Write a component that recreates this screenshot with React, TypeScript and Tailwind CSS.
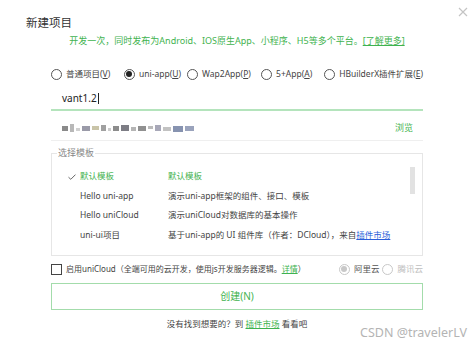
import React from 'react';

const green = 'text-[#3fb34f]';

const Radio = ({ checked, muted }: { checked?: boolean; muted?: boolean }) => (
  <span
    className={`flex h-[11px] w-[11px] shrink-0 items-center justify-center rounded-full border ${
      muted ? 'border-[#c8c8c8]' : 'border-[#555]'
    }`}
  >
    {checked && <span className={`h-[6px] w-[6px] rounded-full ${muted ? 'bg-[#c8c8c8]' : 'bg-[#222]'}`} />}
  </span>
);

const modes = [
  { label: '普通项目', key: 'V', w: 'w-[74px]' },
  { label: 'uni-app', key: 'U', w: 'w-[64px]', checked: true },
  { label: 'Wap2App', key: 'P', w: 'w-[75px]' },
  { label: '5+App', key: 'A', w: 'w-[64px]' },
  { label: 'HBuilderX插件扩展', key: 'E', w: 'flex-1' },
];

const templates = [
  { name: '默认模板', desc: <>默认模板</>, active: true },
  { name: 'Hello uni-app', desc: <>演示uni-app框架的组件、接口、模板</> },
  { name: 'Hello uniCloud', desc: <>演示uniCloud对数据库的基本操作</> },
  {
    name: 'uni-ui项目',
    desc: (
      <>
        基于uni-app的 UI 组件库（作者：DCloud），来自<span className="text-[#2b5fd9] underline">插件市场</span>
      </>
    ),
  },
];

// mosaic blocks standing in for the blurred path
const mosaic = [
  [4, 5, '#8a8a8a', 1], [2, 8, '#b8b8b8', -1], [3, 3, '#d0d0d0', 2], [5, 5, '#9a9aa8', 1], [4, 4, '#c9c4a8', -1],
  [3, 6, '#a0a0a0', 0], [2, 3, '#ccc', 2], [4, 5, '#8c8c8c', 1], [5, 6, '#7d7d85', 0], [3, 4, '#b5b5b5', 2],
  [5, 5, '#909090', 1], [3, 3, '#bbb', -2], [4, 6, '#a8a8b8', 0], [5, 4, '#c2c2c2', 2], [6, 6, '#8793b0', 1],
  [6, 5, '#9aa3bc', 1],
] as const;

export default function App() {
  return (
    <div
      className="relative h-[345px] w-[474px] overflow-hidden bg-white text-[#444]"
      style={{ fontFamily: '"Noto Sans", "Noto Sans CJK SC", sans-serif' }}
    >
      <button className="absolute left-[458px] top-[7px] h-[10px] w-[10px]">
        <svg viewBox="0 0 10 10" className="h-[10px] w-[10px]">
          <path d="M1 1L9 9M9 1L1 9" stroke="#c4c4c4" strokeWidth="1.2" />
        </svg>
      </button>

      <div className="h-[33px] pl-[26px] pt-[13px] text-[11.5px] leading-[20px] text-[#333]">新建项目</div>

      <div className="px-[51px]">
        <p className={`mt-[1px] h-[14px] text-center text-[9px] leading-[14px] ${green}`}>
          开发一次，同时发布为Android、IOS原生App、小程序、H5等多个平台。<span className="underline">[了解更多]</span>
        </p>

        <div className="mt-[17px] flex h-[18px] items-center text-[8.5px]">
          {modes.map((m) => (
            <label key={m.key} className={`flex items-center gap-[4px] ${m.w}`}>
              <Radio checked={m.checked} />
              <span className="whitespace-nowrap">
                {m.label}(<u>{m.key}</u>)
              </span>
            </label>
          ))}
        </div>

        <div className="mt-[4px] flex h-[24px] items-center border-b-2 border-[#b4e4bc] pl-[11px] text-[10px] text-[#222]">
          vant1.2<span className="ml-[1px] h-[11px] w-px bg-[#222]" />
        </div>

        <div className="flex h-[30px] items-center justify-between border-b border-[#efefef] pl-[11px] pr-[10px] pt-[5px]">
          <div className="flex items-center gap-[2px] blur-[0.4px]">
            {mosaic.map(([w, h, c, dy], i) => (
              <span
                key={i}
                className="inline-block"
                style={{ width: w * 1.6, height: h, background: c, marginTop: dy }}
              />
            ))}
          </div>
          <span className={`text-[9px] ${green}`}>浏览</span>
        </div>

        <fieldset className="mt-[5px] border border-[#e6e6e6] pb-[10px]">
          <legend className="ml-[5px] px-[1px] text-[9px] leading-[14px] text-[#888]">选择模板</legend>
          <div className="flex pt-[7px]">
            <div className="flex-1 text-[8.5px]">
              {templates.map((t) => (
                <div key={t.name} className={`flex h-[19.5px] items-center ${t.active ? green : 'text-[#444]'}`}>
                  <span className="flex w-[28px] justify-end pr-[4px]">
                    {t.active && (
                      <svg viewBox="0 0 8 6" className="h-[6px] w-[8px]">
                        <path d="M0.5 3.2L2.8 5.3L7.5 0.6" fill="none" stroke="#666" strokeWidth="1" />
                      </svg>
                    )}
                  </span>
                  <span className="w-[88px] whitespace-nowrap">{t.name}</span>
                  <span className="whitespace-nowrap">{t.desc}</span>
                </div>
              ))}
            </div>
            <div className="mr-[7px] w-[5px]">
              <div className="h-[27px] bg-[#e2e2e2]" />
            </div>
          </div>
        </fieldset>

        <div className="mt-[5px] flex h-[16px] items-center text-[8px]">
          <span className="h-[11px] w-[11px] shrink-0 border border-[#444]" />
          <span className="ml-[4px] whitespace-nowrap">
            启用uniCloud（全端可用的云开发，使用js开发服务器逻辑。<span className={`underline ${green}`}>详情</span>）
          </span>
          <div className="ml-auto flex items-center text-[8.5px]">
            <Radio checked muted />
            <span className="ml-[4px] text-[#555]">阿里云</span>
            <span className="ml-[3px]"><Radio muted /></span>
            <span className="ml-[4px] text-[#c0c0c0]">腾讯云</span>
          </div>
        </div>

        <button
          className={`mt-[6px] flex h-[27px] w-full items-center justify-center border border-[#a3dcab] text-[10px] ${green}`}
        >
          创建(N)
        </button>

        <p className="mt-[7px] h-[14px] text-center text-[8.5px] leading-[14px] text-[#444]">
          没有找到想要的？到 <span className={`underline ${green}`}>插件市场</span> 看看吧
        </p>
      </div>

      <span className="absolute left-[360px] top-[325px] text-[12.5px] leading-[16px] text-[#b4b4b4]">
        CSDN @travelerLV
      </span>
    </div>
  );
}
